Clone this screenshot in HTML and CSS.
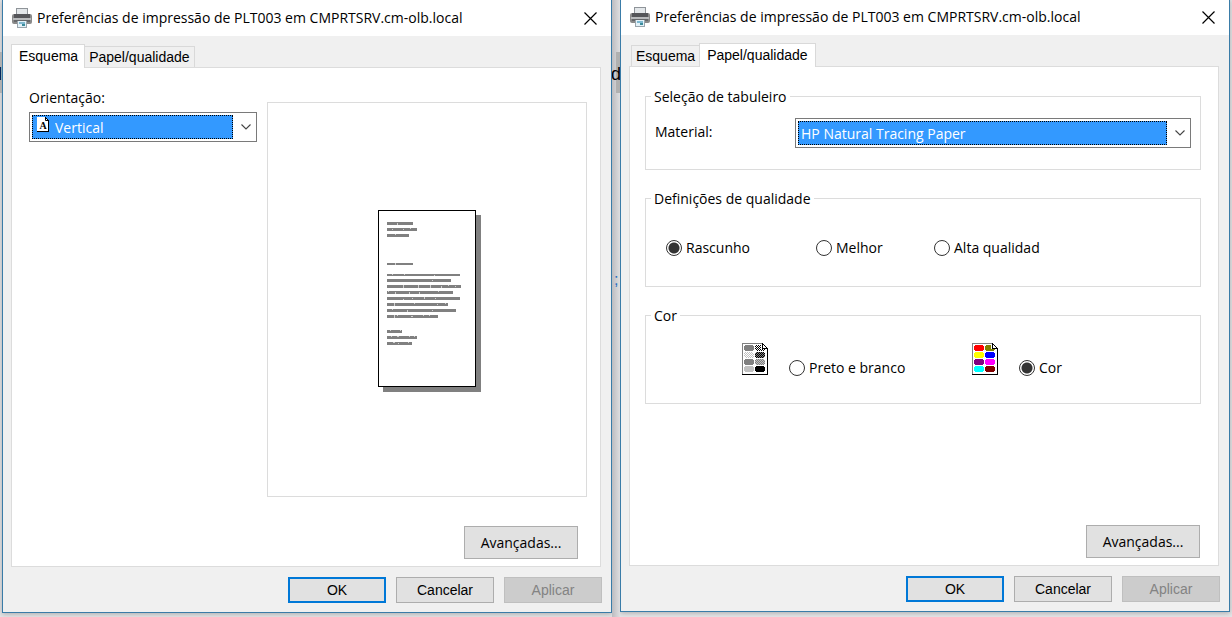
FILE: index.html
```html
<!DOCTYPE html>
<html lang="pt">
<head>
  <meta charset="UTF-8" />
  <title>Preferências de impressão</title>
  <meta name="viewport" content="width=device-width, initial-scale=1.0" />
  <link rel="stylesheet" href="styles.css">
</head>
<body>
  <!-- shared icons -->
  <svg class="sprite" aria-hidden="true">
    <symbol id="printer" viewBox="0 0 20 20">
      <rect x="4" y="0" width="12" height="7" fill="#8f9499" />
      <rect x="5" y="1" width="10" height="6" fill="#e3e7ea" />
      <rect x="0" y="6" width="20" height="10" rx="2" fill="#8a8a8a" />
      <rect x="2" y="6" width="16" height="4" fill="#55565a" />
      <rect x="1" y="10" width="18" height="2" fill="#b9bbbd" />
      <rect x="2" y="12" width="16" height="2" fill="#66686b" />
      <rect x="5" y="13" width="10" height="7" fill="#9aa5ad" />
      <rect x="6" y="13" width="8" height="6" fill="#e4f2f8" />
      <rect x="7" y="14" width="6" height="2" fill="#7fb8d0" />
      <rect x="10" y="16" width="3" height="2" fill="#3c8c9c" />
    </symbol>
    <symbol id="cross" viewBox="0 0 13 13">
      <path d="M.5 .5l12 12M12.5 .5l-12 12" fill="none" stroke="#000" stroke-width="1.2" />
    </symbol>
    <symbol id="chevron" viewBox="0 0 10 6">
      <path d="M.5 .5L5 5L9.500 .5" fill="none" stroke="#444" stroke-width="1.1" />
    </symbol>
    <symbol id="sheet" viewBox="0 0 26 32">
      <path d="M0 0H20L26 6V32H0Z" fill="#fff" />
      <path d="M.5 31V.5H20" fill="none" stroke="#808080" />
      <path d="M0 31.500H26M25.500 6V32" fill="none" stroke="#000" />
      <path d="M20.500 0V5.500H26M20 0L26 6" fill="none" stroke="#000" />
    </symbol>
  </svg>

  <div class="desktop">
    <span class="behind edge">d</span>
    <section class="window" aria-label="Esquema">
      <header class="titlebar">
        <svg class="printer" aria-hidden="true"><use href="#printer" /></svg>
        <h1>Preferências de impressão de PLT003 em CMPRTSRV.cm-olb.local</h1>
        <button class="close" type="button" aria-label="Fechar"><svg aria-hidden="true"><use href="#cross" /></svg></button>
      </header>

      <div class="tabs" role="tablist">
        <button class="tab active" type="button" role="tab" aria-selected="true">Esquema</button>
        <button class="tab" type="button" role="tab" aria-selected="false">Papel/qualidade</button>
      </div>

      <div class="panel" role="tabpanel">
        <div class="layout">
          <div class="orientation">
            <label for="orientation">Orientação:</label>
            <div class="combo with-icon">
              <select id="orientation">
                <option>Vertical</option>
                <option>Horizontal</option>
              </select>
              <svg class="chevron" aria-hidden="true"><use href="#chevron" /></svg>
              <svg class="page-icon" viewBox="0 0 12 15" aria-hidden="true">
                <path d="M0 0H8L12 4V15H0Z" fill="#fff" />
                <path d="M0 14.500H12M11.500 4V15M8.500 0V3.500H12M8 0L12 4" fill="none" stroke="#000" />
                <text x="6" y="12" text-anchor="middle">A</text>
              </svg>
            </div>
          </div>
          <div class="preview">
            <svg class="page" viewBox="0 0 103 182" role="img" aria-label="Página vertical">
              <rect x="5" y="5" width="98" height="177" fill="#808080" />
              <rect x=".5" y=".5" width="97" height="176" fill="#fff" stroke="#000" />
              <path fill="#808080" d="M9 12h26v3H9zM9 18h30v3H9zM9 24h22v3H9zM9 53h26v2H9zM9 64h73v2H9zM9 69h64v3H9zM9 75h74v3H9zM9 81h66v3H9zM9 87h73v3H9zM9 93h61v3H9zM9 99h69v3H9zM9 105h51v3H9zM9 120h15v3H9zM9 126h30v3H9zM9 132h25v3H9z" />
              <path fill="#d0d0d0" d="M19 13h1v2h-1zM14 19h1v1h-1zM25 19h1v1h-1zM32 18h1v1h-1zM17 24h1v1h-1zM17 53h1v2h-1zM14 64h1v1h-1zM26 64h1v1h-1zM56 65h1v1h-1zM54 70h1v1h-1zM25 75h1v3h-1zM40 75h1v3h-1zM52 75h1v3h-1zM63 76h1v2h-1zM70 75h1v1h-1zM77 76h1v1h-1zM10 81h1v1h-1zM17 82h1v2h-1zM31 82h1v2h-1zM41 82h1v2h-1zM60 81h1v1h-1zM25 89h1v1h-1zM34 88h1v1h-1zM46 87h1v2h-1zM57 88h1v1h-1zM16 93h1v3h-1zM36 93h1v1h-1zM59 94h1v1h-1zM67 93h1v1h-1zM14 99h1v1h-1zM29 100h1v2h-1zM54 100h1v1h-1zM16 105h1v3h-1zM19 105h1v1h-1zM33 106h2v1h-2zM45 105h1v1h-1zM51 105h1v1h-1zM12 120h1v1h-1zM22 120h1v1h-1zM13 126h1v1h-1zM19 126h2v1h-2zM31 126h1v1h-1zM36 126h1v1h-1zM15 132h2v1h-2zM20 133h1v1h-1zM30 132h1v1h-1z" />
            </svg>
          </div>
        </div>
        <button class="btn advanced" type="button">Avançadas...</button>
      </div>

      <footer class="actions">
        <button class="btn default" type="button">OK</button>
        <button class="btn" type="button">Cancelar</button>
        <button class="btn" type="button" disabled>Aplicar</button>
      </footer>
    </section>

    <div class="gutter" aria-hidden="true">
      <span class="behind">d</span>
      <span class="behind mark">;</span>
    </div>

    <section class="window second" aria-label="Papel/qualidade">
      <header class="titlebar">
        <svg class="printer" aria-hidden="true"><use href="#printer" /></svg>
        <h1>Preferências de impressão de PLT003 em CMPRTSRV.cm-olb.local</h1>
        <button class="close" type="button" aria-label="Fechar"><svg aria-hidden="true"><use href="#cross" /></svg></button>
      </header>

      <div class="tabs" role="tablist">
        <button class="tab" type="button" role="tab" aria-selected="false">Esquema</button>
        <button class="tab active" type="button" role="tab" aria-selected="true">Papel/qualidade</button>
      </div>

      <div class="panel" role="tabpanel">
        <div class="groups">
          <fieldset class="tray">
            <legend>Seleção de tabuleiro</legend>
            <div class="material">
              <label for="material">Material:</label>
              <div class="combo">
                <select id="material">
                  <option>HP Natural Tracing Paper</option>
                </select>
                <svg class="chevron" aria-hidden="true"><use href="#chevron" /></svg>
              </div>
            </div>
          </fieldset>

          <fieldset>
            <legend>Definições de qualidade</legend>
            <div class="quality">
              <label class="radio"><input type="radio" name="quality" checked>Rascunho</label>
              <label class="radio"><input type="radio" name="quality">Melhor</label>
              <label class="radio"><input type="radio" name="quality">Alta qualidad</label>
            </div>
          </fieldset>

          <fieldset>
            <legend>Cor</legend>
            <div class="colors">
              <div class="color">
                <svg class="sheet" viewBox="0 0 26 32" aria-hidden="true">
                  <defs>
                    <pattern id="dots-dark" width="2" height="2" patternUnits="userSpaceOnUse"><path d="M0 0h1v1H0zM1 1h1v1H1z" fill="#000" /></pattern>
                    <pattern id="dots-mid" width="2" height="2" patternUnits="userSpaceOnUse"><rect width="2" height="2" fill="#808080" /><path d="M0 0h1v1H0zM1 1h1v1H1z" fill="#000" /></pattern>
                    <pattern id="dots-gray" width="2" height="2" patternUnits="userSpaceOnUse"><rect width="2" height="2" fill="#c0c0c0" /><path d="M0 0h1v1H0zM1 1h1v1H1z" fill="#808080" /></pattern>
                    <pattern id="dots-light" width="2" height="2" patternUnits="userSpaceOnUse"><path d="M0 0h1v1H0zM1 1h1v1H1z" fill="#c0c0c0" /></pattern>
                  </defs>
                  <use href="#sheet" />
                  <path d="M3 2h8v1h1v4h-1v1H3V7H2V3h1z" fill="#808080" />
                  <path d="M14 2h5v4h4v1h-1v1h-8V7h-1V3h1z" fill="url(#dots-dark)" />
                  <path d="M3 9h8v1h1v4h-1v1H3v-1H2v-4h1z" fill="url(#dots-light)" />
                  <path d="M14 9h8v1h1v4h-1v1h-8v-1h-1v-4h1z" fill="url(#dots-mid)" />
                  <path d="M3 16h8v1h1v4h-1v1H3v-1H2v-4h1z" fill="#808080" />
                  <path d="M14 16h8v1h1v4h-1v1h-8v-1h-1v-4h1z" fill="url(#dots-gray)" />
                  <path d="M3 23h8v1h1v4h-1v1H3v-1H2v-4h1z" fill="#c0c0c0" />
                  <path d="M14 23h8v1h1v4h-1v1h-8v-1h-1v-4h1z" fill="#000" />
                </svg>
                <label class="radio"><input type="radio" name="color">Preto e branco</label>
              </div>
              <div class="color">
                <svg class="sheet" viewBox="0 0 26 32" aria-hidden="true">
                  <use href="#sheet" />
                  <path d="M3 2h8v1h1v4h-1v1H3V7H2V3h1z" fill="#f00" />
                  <path d="M14 2h5v4h4v1h-1v1h-8V7h-1V3h1z" fill="#808000" />
                  <path d="M3 9h8v1h1v4h-1v1H3v-1H2v-4h1z" fill="#ff0" />
                  <path d="M14 9h8v1h1v4h-1v1h-8v-1h-1v-4h1z" fill="#00f" />
                  <path d="M3 16h8v1h1v4h-1v1H3v-1H2v-4h1z" fill="#800080" />
                  <path d="M14 16h8v1h1v4h-1v1h-8v-1h-1v-4h1z" fill="#f0f" />
                  <path d="M3 23h8v1h1v4h-1v1H3v-1H2v-4h1z" fill="#0ff" />
                  <path d="M14 23h8v1h1v4h-1v1h-8v-1h-1v-4h1z" fill="#800000" />
                </svg>
                <label class="radio"><input type="radio" name="color" checked>Cor</label>
              </div>
            </div>
          </fieldset>
        </div>
        <button class="btn advanced" type="button">Avançadas...</button>
      </div>

      <footer class="actions">
        <button class="btn default" type="button">OK</button>
        <button class="btn" type="button">Cancelar</button>
        <button class="btn" type="button" disabled>Aplicar</button>
      </footer>
    </section>
  </div>
</body>
</html>
```

FILE: styles.css
```css
* {
  box-sizing: border-box;
}
body {
  margin: 0;
  background: #e4e4e6;
  color: #000;
  font-family: 'Open Sans', 'Noto Sans', sans-serif;
  font-size: 14px;
  line-height: 20px;
}
button, select, input {
  font: inherit;
  color: inherit;
  margin: 0;
}
.sprite {
  position: absolute;
  width: 0;
  height: 0;
}
.desktop {
  position: relative;
  display: flex;
  align-items: flex-start;
  min-height: 100vh;
  padding: 0 2px;
  overflow: hidden;
}

/* what shows between the windows */
.gutter {
  position: relative;
  align-self: stretch;
  width: 8px;
  overflow: hidden;
  background: linear-gradient(to right, #bcbcc0, #dedee0);
}
.behind {
  position: absolute;
  top: 52px;
  left: 4px;
  width: 8px;
  height: 41px;
  background: #b0b0b0;
  font-family: 'Liberation Sans', sans-serif;
  font-size: 18px;
  line-height: 44px;
  text-indent: -5px;
}
.behind.edge {
  left: 0;
  width: 2px;
  overflow: hidden;
  text-indent: -8px;
}
.behind.mark {
  top: 258px;
  left: 2px;
  background: none;
  color: #2a6fc0;
  font-size: 16px;
  text-indent: 0;
}

/* window */
.window {
  flex: 1;
  min-width: 0;
  border: 1px solid #3a7ca8;
  border-top: 0;
  background: #f0f0f0;
  box-shadow: 0 1px 5px rgba(0, 0, 0, 0.25);
}
.window.second {
  margin-top: -1px;
}
.titlebar {
  display: flex;
  align-items: center;
  height: 36px;
  padding: 0 14px 0 9px;
  background: #fff;
}
.titlebar h1 {
  flex: 1;
  margin: 0;
  font-size: 14px;
  font-weight: normal;
  white-space: nowrap;
}
.printer {
  width: 20px;
  height: 20px;
  margin-right: 5px;
}
.close {
  display: flex;
  padding: 0;
  border: 0;
  background: none;
}
.close svg {
  width: 13px;
  height: 13px;
}

/* tabs */
.tabs {
  display: flex;
  align-items: flex-end;
  padding: 8px 8px 0;
}
.tab {
  height: 21px;
  padding: 0 4px;
  border: 1px solid #d9d9d9;
  border-bottom: 0;
  background: #f0f0f0;
  font-family: 'Liberation Sans', Arial, sans-serif;
  font-size: 14px;
}
.tab.active {
  position: relative;
  height: 24px;
  padding: 0 7px 2px;
  margin-bottom: -1px;
  background: #fff;
}
.tab.active:first-child {
  padding-right: 6px;
}
.tab.active + .tab {
  border-left: 0;
}
.tab:not(.active):first-child {
  margin-left: 2px;
  border-right: 0;
}
.panel {
  display: flex;
  flex-direction: column;
  min-height: 500px;
  margin: 0 10px 0 8px;
  padding: 20px 13px 7px 17px;
  border: 1px solid #dcdcdc;
  background: #fff;
}
.second .panel {
  padding: 20px 17px 7px 15px;
}

/* layout tab */
.layout {
  display: flex;
  gap: 10px;
}
.orientation {
  width: 228px;
}
.orientation label {
  display: block;
  margin-bottom: 4px;
}
.preview {
  flex: 1;
  display: flex;
  align-items: center;
  justify-content: center;
  height: 395px;
  margin-top: 14px;
  padding: 3px 0 0 5px;
  border: 1px solid #dcdcdc;
}
.page {
  width: 103px;
  height: 182px;
}

/* drop-downs */
.combo {
  position: relative;
  display: flex;
  align-items: center;
  height: 30px;
  padding: 2px 0 2px 2px;
  border: 1px solid #7a7a7a;
  background: #fff;
}
.combo select {
  flex: 1;
  min-width: 0;
  height: 24px;
  padding: 2px 2px 0;
  appearance: none;
  border: 1px dotted #000;
  border-radius: 0;
  background: #3399ff;
  color: #fff;
}
.combo.with-icon select {
  padding-left: 22px;
}
.chevron {
  width: 10px;
  height: 6px;
  margin: 0 5px 0 8px;
}
.page-icon {
  position: absolute;
  top: 4px;
  left: 7px;
  width: 12px;
  height: 15px;
}
.page-icon text {
  font-family: 'Liberation Serif', serif;
  font-size: 10px;
  font-weight: bold;
}

/* paper and quality tab */
.groups {
  display: flex;
  flex-direction: column;
  gap: 19px;
}
fieldset {
  min-width: 0;
  height: 98px;
  margin: 0;
  padding: 0 9px 0 5px;
  border: 1px solid #dcdcdc;
}
fieldset.tray {
  height: 83px;
}
legend {
  padding: 0 3px;
  line-height: 19px;
}
.material {
  display: flex;
  padding: 12px 0 0 4px;
}
.material label {
  width: 140px;
  padding-top: 4px;
}
.material .combo {
  flex: 1;
}
.quality {
  display: grid;
  grid-template-columns: 150px 118px auto;
  padding: 30px 0 0 15px;
}
.radio {
  display: flex;
  align-items: center;
  gap: 4px;
  white-space: nowrap;
}
.radio input {
  width: 16px;
  height: 16px;
  appearance: none;
  border: 1px solid #333;
  border-radius: 50%;
  background: #fff;
}
.radio input:checked {
  background: radial-gradient(circle, #333 5px, #fff 6px);
}
.colors {
  display: grid;
  grid-template-columns: 230px auto;
  padding: 18px 0 0 91px;
}
.color {
  display: flex;
  align-items: flex-start;
  gap: 21px;
}
.color .radio {
  padding-top: 15px;
}
.sheet {
  width: 26px;
  height: 32px;
  shape-rendering: crispEdges;
}

/* buttons */
.btn {
  width: 98px;
  height: 26px;
  padding: 0;
  border: 1px solid #adadad;
  background: #e1e1e1;
  font-family: 'Liberation Sans', Arial, sans-serif;
  font-size: 14px;
}
.btn.default {
  border: 2px solid #0078d7;
}
.btn:disabled {
  border-color: #bfbfbf;
  background: #ccc;
  color: #838383;
}
.btn.advanced {
  align-self: flex-end;
  width: 114px;
  height: 33px;
  margin: auto 9px 0 0;
  font-family: 'Open Sans', 'Noto Sans', sans-serif;
}
.second .btn.advanced {
  margin-right: 1px;
}
.actions {
  display: flex;
  justify-content: flex-end;
  gap: 10px;
  padding: 10px 9px 9px;
}
```
